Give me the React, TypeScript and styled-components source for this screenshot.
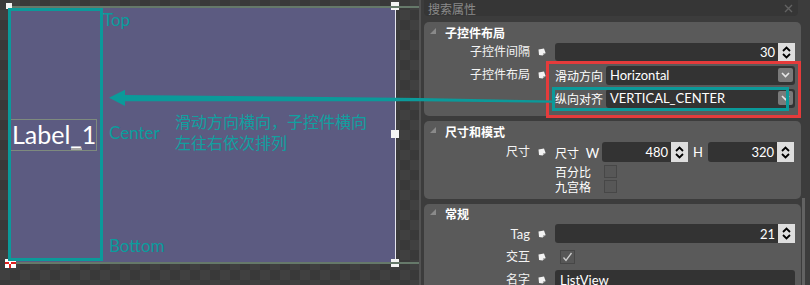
import React from "react";
import styled, { createGlobalStyle } from "styled-components";

const GlobalStyle = createGlobalStyle`
  html, body { margin: 0; padding: 0; background: #3c3c3c; overflow: hidden; }
  body { font-family: Lato, "Noto Sans CJK SC", sans-serif; }
  * { box-sizing: border-box; }
`;

const TEAL = "#0b9a9a";

const Root = styled.div`
  position: relative;
  display: flex;
  width: 810px;
  height: 285px;
  overflow: hidden;
  background: #3c3c3c;
`;

/* ---------- design canvas ---------- */

const Canvas = styled.div`
  position: relative;
  width: 419px;
  flex: none;
  padding: 7px 0 0 8px;
  background-color: #393939;
  background-image: conic-gradient(#404040 25%, transparent 0 50%, #404040 0 75%, transparent 0);
  background-size: 20px 20px;
`;

const ListView = styled.div`
  width: 388px;
  height: 255px;
  background: #5c5b81;
  border-right: 1px solid #e4e4ee;
  display: flex;
  align-items: center;
  padding-left: 2px;
`;

const LabelWidget = styled.div`
  position: relative;
  width: 87px;
  height: 32px;
  border: 1px solid #7e8a7e;
  padding-left: 1px;
  color: #ffffff;
  font: 25px/29px Lato, sans-serif;
  white-space: nowrap;
  &::after {
    content: "";
    position: absolute;
    left: 60px;
    bottom: 0;
    width: 11px;
    height: 2px;
    background: #a8a8a8;
  }
`;

const GuideLine = styled.div<{ $top: number; $left: number }>`
  position: absolute;
  left: ${(p) => p.$left}px;
  right: 0;
  top: ${(p) => p.$top}px;
  height: 2px;
  background: #66796a;
  z-index: 3;
`;

const Handle = styled.div<{ $x: number; $y: number }>`
  position: absolute;
  left: ${(p) => p.$x}px;
  top: ${(p) => p.$y}px;
  width: 8px;
  height: 8px;
  background: #f4f4f4;
  z-index: 2;
`;

const CornerMark = styled.div`
  position: absolute;
  left: 6px;
  top: 3px;
  width: 6px;
  height: 6px;
  background: #f4f4f4;
  z-index: 4;
`;

const Anchor = styled.svg`
  position: absolute;
  left: 5px;
  top: 259px;
  z-index: 4;
`;

const TealFrame = styled.div`
  position: absolute;
  left: 8px;
  top: 8px;
  width: 95px;
  height: 253px;
  border: 3px solid ${TEAL};
  z-index: 5;
`;

const Note = styled.div<{ $x: number; $y: number }>`
  position: absolute;
  left: ${(p) => p.$x}px;
  top: ${(p) => p.$y}px;
  color: #0a9d9d;
  font: 400 17px/1.2 Lato, "Noto Sans CJK SC", sans-serif;
  white-space: nowrap;
  z-index: 5;
`;

const ZhNote = styled(Note)`
  font: 400 16px/21px "Noto Sans CJK SC", sans-serif;
  color: #11a0a0;
`;

/* ---------- property panel ---------- */

const Divider = styled.div`
  width: 2px;
  flex: none;
  background: #525252;
`;

const Panel = styled.div`
  flex: 1;
  min-width: 0;
  display: flex;
`;

const PanelBody = styled.div`
  flex: 1;
  min-width: 0;
  display: flex;
  flex-direction: column;
  gap: 5px;
  padding-left: 3px;
`;

const ScrollTrack = styled.div`
  position: relative;
  width: 9px;
  flex: none;
  &::before {
    content: "";
    position: absolute;
    left: 1px;
    top: 198px;
    bottom: 0;
    width: 3px;
    background: #626262;
  }
`;

const SearchBar = styled.div`
  flex: none;
  height: 20px;
  margin: -4px 3px 1px 0;
  padding: 4px 5px 0 4px;
  background: #363636;
  border-radius: 4px;
  display: flex;
  align-items: center;
  justify-content: space-between;
  color: #8a8a8a;
  font-size: 12px;
`;

const Card = styled.section<{ $h: number }>`
  flex: none;
  height: ${(p) => p.$h}px;
  background: #5a5a5a;
  border-radius: 5px;
  padding-right: 6px;
  display: flex;
  flex-direction: column;
`;

const CardHeader = styled.div<{ $h: number }>`
  flex: none;
  height: ${(p) => p.$h}px;
  display: flex;
  align-items: center;
  gap: 9px;
  padding-left: 6px;
  color: #ffffff;
  font-size: 12px;
  font-weight: 700;
`;

const Caret = styled.svg`
  margin-bottom: 3px;
`;

const Row = styled.div<{ $h?: number; $top?: boolean; $pt?: number }>`
  flex: none;
  display: grid;
  grid-template-columns: 106px 25px 1fr;
  align-items: ${(p) => (p.$top ? "start" : "center")};
  ${(p) => (p.$h ? `height: ${p.$h}px;` : "")}
  padding-top: ${(p) => p.$pt ?? 0}px;
`;

const RowLabel = styled.div<{ $lh?: number }>`
  text-align: right;
  white-space: nowrap;
  color: #f4f4f4;
  font-size: 12px;
  line-height: ${(p) => p.$lh ?? 16}px;
`;

const LatinLabel = styled(RowLabel)`
  font-size: 13px;
`;

const PinCell = styled.div<{ $lh?: number }>`
  height: ${(p) => p.$lh ?? 16}px;
  display: flex;
  align-items: center;
  padding-left: 8px;
`;

const Stack = styled.div<{ $gap?: number }>`
  display: flex;
  flex-direction: column;
  gap: ${(p) => p.$gap ?? 0}px;
`;

const FieldLine = styled.div<{ $h: number; $gap: number; $mt?: number }>`
  display: flex;
  align-items: center;
  height: ${(p) => p.$h}px;
  gap: ${(p) => p.$gap}px;
  margin-top: ${(p) => p.$mt ?? 0}px;
`;

const FieldName = styled.span<{ $w: number }>`
  width: ${(p) => p.$w}px;
  flex: none;
  white-space: nowrap;
  color: #ffffff;
  font-size: 13px;
`;

const Zh = styled.span`
  font-size: 12px;
`;

const Select = styled.div`
  flex: 1;
  height: 19px;
  background: #333333;
  border-radius: 3px;
  display: flex;
  align-items: center;
  justify-content: space-between;
  padding: 0 2px 0 4px;
  color: #ffffff;
  font-size: 13px;
`;

const DropBtn = styled.span`
  width: 15px;
  height: 14px;
  background: #7a7a7a;
  border-radius: 2px;
  display: flex;
  align-items: center;
  justify-content: center;
`;

const NumBox = styled.div<{ $w?: number; $h: number }>`
  display: flex;
  height: ${(p) => p.$h}px;
  ${(p) => (p.$w ? `width: ${p.$w}px; flex: none;` : "flex: 1;")}
`;

const NumField = styled.div`
  flex: 1;
  background: #333333;
  border-radius: 3px 0 0 3px;
  display: flex;
  align-items: center;
  justify-content: flex-end;
  padding-right: 3px;
  color: #ffffff;
  font-size: 13px;
`;

const Spinner = styled.div`
  width: 17px;
  flex: none;
  background: #dedede;
  display: flex;
  align-items: center;
  justify-content: center;
`;

const TextField = styled.div`
  height: 19px;
  background: #333333;
  border-radius: 3px;
  display: flex;
  align-items: center;
  padding-left: 5px;
  color: #ffffff;
  font-size: 13px;
`;

const CheckBox = styled.div<{ $w: number; $h: number; $ml?: number }>`
  width: ${(p) => p.$w}px;
  height: ${(p) => p.$h}px;
  margin-left: ${(p) => p.$ml ?? 0}px;
  border: 1px solid #474747;
  background: #575757;
  display: flex;
  align-items: center;
  justify-content: center;
`;

/* ---------- annotations over everything ---------- */

const Callout = styled.div<{ $x: number; $y: number; $w: number; $h: number; $c: string }>`
  position: absolute;
  left: ${(p) => p.$x}px;
  top: ${(p) => p.$y}px;
  width: ${(p) => p.$w}px;
  height: ${(p) => p.$h}px;
  border: 3px solid ${(p) => p.$c};
  z-index: 10;
  pointer-events: none;
`;

const ArrowLayer = styled.svg`
  position: absolute;
  left: 0;
  top: 0;
  z-index: 11;
  pointer-events: none;
`;

/* ---------- small drawings ---------- */

const Pin = () => (
  <svg width="8" height="8" viewBox="0 0 8 8">
    <path d="M0.5 1.5 L6 0.6 L7.6 5 L4.6 7.6 L1 7 Z" fill="#f2f2f2" />
    <path d="M7.6 5 L4.6 7.6 L5.2 5.2 Z" fill="#9c9c9c" />
  </svg>
);

const SpinArrows = () => (
  <svg width="17" height="17" viewBox="0 0 17 17">
    <path d="M5 7 L8.5 3.6 L12 7" fill="none" stroke="#000" strokeWidth="1.8" />
    <path d="M5 10 L8.5 13.4 L12 10" fill="none" stroke="#000" strokeWidth="1.8" />
  </svg>
);

const Chevron = () => (
  <svg width="9" height="6" viewBox="0 0 9 6">
    <path d="M1 1 L4.5 4.6 L8 1" fill="none" stroke="#e6e6e6" strokeWidth="1.6" />
  </svg>
);

const Num = ({ value, w, h }: { value: string; w?: number; h: number }) => (
  <NumBox $w={w} $h={h}>
    <NumField>{value}</NumField>
    <Spinner>
      <SpinArrows />
    </Spinner>
  </NumBox>
);

const Header = ({ title, h }: { title: string; h: number }) => (
  <CardHeader $h={h}>
    <Caret width="6" height="6" viewBox="0 0 6 6">
      <path d="M6 0 L6 6 L0 6 Z" fill="#8a8a8a" />
    </Caret>
    {title}
  </CardHeader>
);

export default function App() {
  return (
    <>
      <GlobalStyle />
      <Root>
        <Canvas>
          <ListView>
            <LabelWidget>Label_1</LabelWidget>
          </ListView>
          <GuideLine $top={6} $left={8} />
          <GuideLine $top={262} $left={10} />
          <Handle $x={391} $y={2} />
          <Handle $x={391} $y={130} />
          <Handle $x={391} $y={259} />
          <CornerMark />
          <Anchor width="11" height="9" viewBox="0 0 11 9">
            <rect x="0" y="0" width="11" height="9" fill="#ffffff" />
            <rect x="0" y="3" width="4" height="2" fill="#e02020" />
            <rect x="6" y="3" width="5" height="2" fill="#e02020" />
            <rect x="4" y="5" width="2" height="4" fill="#e02020" />
          </Anchor>
          <TealFrame />
          <Note $x={103} $y={10}>Top</Note>
          <Note $x={109} $y={123}>Center</Note>
          <Note $x={109} $y={236}>Bottom</Note>
          <ZhNote $x={175} $y={111}>
            滑动方向横向，子控件横向
            <br />
            左往右依次排列
          </ZhNote>
        </Canvas>

        <Divider />

        <Panel>
          <PanelBody>
            <SearchBar>
              <span>搜索属性</span>
              <svg width="9" height="9" viewBox="0 0 9 9">
                <path d="M1 1 L8 8 M8 1 L1 8" stroke="#626262" strokeWidth="1.4" />
              </svg>
            </SearchBar>

            <Card $h={94}>
              <Header title="子控件布局" h={20} />
              <Row $h={20}>
                <RowLabel>子控件间隔</RowLabel>
                <PinCell>
                  <Pin />
                </PinCell>
                <Num value="30" h={18} />
              </Row>
              <Row $top $pt={2}>
                <RowLabel $lh={22}>子控件布局</RowLabel>
                <PinCell $lh={22}>
                  <Pin />
                </PinCell>
                <Stack $gap={1}>
                  <FieldLine $h={22} $gap={3}>
                    <FieldName $w={48}>
                      <Zh>滑动方向</Zh>
                    </FieldName>
                    <Select>
                      Horizontal
                      <DropBtn>
                        <Chevron />
                      </DropBtn>
                    </Select>
                  </FieldLine>
                  <FieldLine $h={22} $gap={3}>
                    <FieldName $w={48}>
                      <Zh>纵向对齐</Zh>
                    </FieldName>
                    <Select>
                      VERTICAL_CENTER
                      <DropBtn>
                        <Chevron />
                      </DropBtn>
                    </Select>
                  </FieldLine>
                </Stack>
              </Row>
            </Card>

            <Card $h={78}>
              <Header title="尺寸和模式" h={20} />
              <Row $top>
                <RowLabel $lh={22}>尺寸</RowLabel>
                <PinCell $lh={22}>
                  <Pin />
                </PinCell>
                <Stack>
                  <FieldLine $h={22} $gap={5}>
                    <FieldName $w={42}>
                      <Zh>尺寸</Zh>&nbsp;&nbsp;W
                    </FieldName>
                    <Num value="480" w={86} h={20} />
                    <FieldName $w={10}>H</FieldName>
                    <Num value="320" w={86} h={20} />
                  </FieldLine>
                  <FieldLine $h={15} $gap={0} $mt={1}>
                    <FieldName $w={49}>
                      <Zh>百分比</Zh>
                    </FieldName>
                    <CheckBox $w={13} $h={13} />
                  </FieldLine>
                  <FieldLine $h={15} $gap={0}>
                    <FieldName $w={49}>
                      <Zh>九宫格</Zh>
                    </FieldName>
                    <CheckBox $w={13} $h={13} />
                  </FieldLine>
                </Stack>
              </Row>
            </Card>

            <Card $h={95}>
              <Header title="常规" h={18} />
              <Row $h={23}>
                <LatinLabel>Tag</LatinLabel>
                <PinCell>
                  <Pin />
                </PinCell>
                <Num value="21" h={19} />
              </Row>
              <Row $h={23}>
                <RowLabel>交互</RowLabel>
                <PinCell>
                  <Pin />
                </PinCell>
                <CheckBox $w={15} $h={14} $ml={5}>
                  <svg width="11" height="10" viewBox="0 0 11 10">
                    <path d="M1.5 5.5 L4 8.5 L9.5 1" fill="none" stroke="#cfcfcf" strokeWidth="1.3" />
                  </svg>
                </CheckBox>
              </Row>
              <Row $h={23}>
                <RowLabel>名字</RowLabel>
                <PinCell>
                  <Pin />
                </PinCell>
                <TextField>ListView</TextField>
              </Row>
            </Card>
          </PanelBody>
          <ScrollTrack />
        </Panel>

        <Callout $x={546} $y={61} $w={255} $h={57} $c="#e53b3b" />
        <Callout $x={552} $y={87} $w={237} $h={24} $c={TEAL} />
        <ArrowLayer width="810" height="285" viewBox="0 0 810 285">
          <polygon
            points="109,97.8 125,89.8 125,95 420,98 553,100.6 553,102.8 420,101.2 125,101.2 125,106"
            fill={TEAL}
          />
        </ArrowLayer>
      </Root>
    </>
  );
}
